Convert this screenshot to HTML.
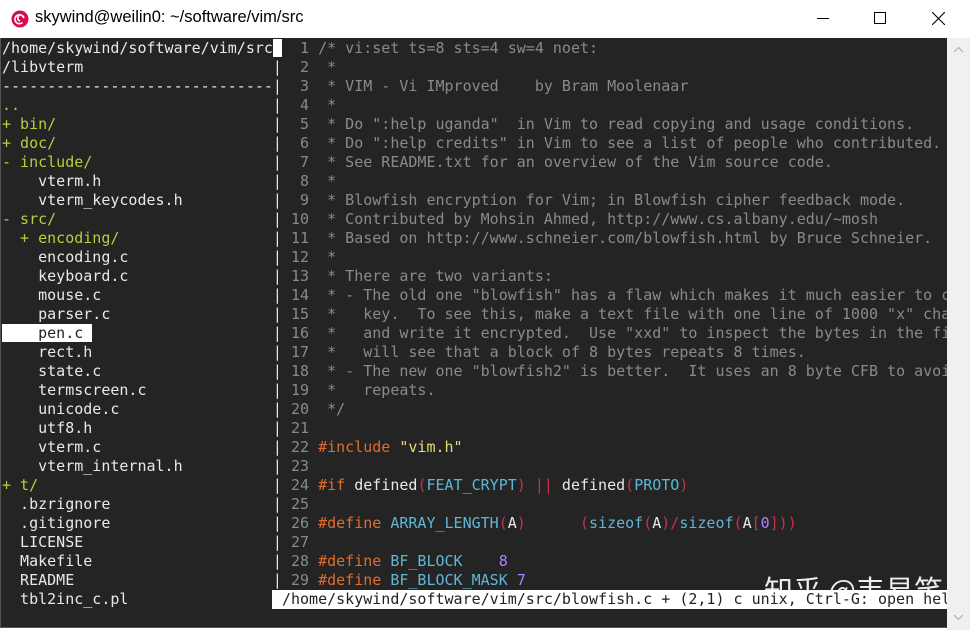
<!DOCTYPE html>
<html><head><meta charset="utf-8"><style>
*{margin:0;padding:0;box-sizing:border-box}
body{width:970px;height:630px;overflow:hidden;background:#fff;position:relative;font-family:"Liberation Sans",sans-serif}
#title{position:absolute;left:0;top:0;width:970px;height:38px;background:#fff}
#title .t{position:absolute;left:35px;top:8px;font-size:16.5px;color:#000}
#term{position:absolute;left:0;top:38px;width:947px;height:590px;background:#242424;border-left:1px solid #555;border-bottom:1px solid #555}
#sb{position:absolute;left:947px;top:38px;width:23px;height:592px;background:#f0f0f0}
.r{position:absolute;left:2px;height:19px;line-height:19px;white-space:pre;font-family:"DejaVu Sans Mono","Liberation Mono",monospace;font-size:15px;color:#e8e8e8;width:945px;overflow:hidden}
.d{color:#b5cf3f}.c{color:#8a8a8a}.n{color:#8a8a8a}.p{color:#e06c2c}.s{color:#e6db74}.b{color:#5fb6d6}.x{color:#c8304a}.m{color:#ae81ff}.w{color:#fff}
.sel{background:#fff;color:#222}
#status{position:absolute;left:272px;top:590px;width:675px;height:19px;background:#fff}
#wm{position:absolute;left:764px;top:568px;font-family:"Noto Sans CJK SC",sans-serif;font-size:29px;color:rgba(255,255,255,.92);white-space:nowrap}
</style></head><body>
<div id="title">
<svg style="position:absolute;left:11px;top:10px" width="18" height="18" viewBox="0 0 18 18"><circle cx="9" cy="9" r="8.5" fill="#d70a53"/><path d="M11.5 12.5 A4.5 4.5 0 1 1 12.8 8 A3 3 0 1 0 9 11" fill="none" stroke="#fff" stroke-width="1.6"/></svg>
<div class="t">skywind@weilin0: ~/software/vim/src</div>
<div style="position:absolute;left:817px;top:18px;width:12px;height:1px;background:#000"></div>
<div style="position:absolute;left:874px;top:12px;width:12px;height:12px;border:1px solid #000"></div>
<svg style="position:absolute;left:932px;top:12px" width="13" height="13"><path d="M0 0L13 13M13 0L0 13" stroke="#000" stroke-width="1.1"/></svg>
</div>
<div id="term"></div>
<div id="sb"><svg style="position:absolute;left:6px;top:8px" width="11" height="7"><path d="M1 6L5.5 1.5L10 6" stroke="#aaa" fill="none"/></svg><svg style="position:absolute;left:6px;top:576px" width="11" height="7"><path d="M1 1L5.5 5.5L10 1" stroke="#aaa" fill="none"/></svg></div>
<div id="status"></div>

<div class="r" style="top:39px">/home/skywind/software/vim/src<span class="sel"> </span><span class="n">  1</span> <span class="c">/* vi:set ts=8 sts=4 sw=4 noet:</span></div>
<div class="r" style="top:58px">/libvterm                     |<span class="n">  2</span> <span class="c"> *</span></div>
<div class="r" style="top:77px">------------------------------|<span class="n">  3</span> <span class="c"> * VIM - Vi IMproved    by Bram Moolenaar</span></div>
<div class="r" style="top:96px"><span class="d">..</span>                            |<span class="n">  4</span> <span class="c"> *</span></div>
<div class="r" style="top:115px"><span class="d">+ bin/</span>                        |<span class="n">  5</span> <span class="c"> * Do ":help uganda"  in Vim to read copying and usage conditions.</span></div>
<div class="r" style="top:134px"><span class="d">+ doc/</span>                        |<span class="n">  6</span> <span class="c"> * Do ":help credits" in Vim to see a list of people who contributed.</span></div>
<div class="r" style="top:153px"><span class="d">- include/</span>                    |<span class="n">  7</span> <span class="c"> * See README.txt for an overview of the Vim source code.</span></div>
<div class="r" style="top:172px">    vterm.h                   |<span class="n">  8</span> <span class="c"> *</span></div>
<div class="r" style="top:191px">    vterm_keycodes.h          |<span class="n">  9</span> <span class="c"> * Blowfish encryption for Vim; in Blowfish cipher feedback mode.</span></div>
<div class="r" style="top:210px"><span class="d">- src/</span>                        |<span class="n"> 10</span> <span class="c"> * Contributed by Mohsin Ahmed, http://www.cs.albany.edu/~mosh</span></div>
<div class="r" style="top:229px"><span class="d">  + encoding/</span>                 |<span class="n"> 11</span> <span class="c"> * Based on http://www.schneier.com/blowfish.html by Bruce Schneier.</span></div>
<div class="r" style="top:248px">    encoding.c                |<span class="n"> 12</span> <span class="c"> *</span></div>
<div class="r" style="top:267px">    keyboard.c                |<span class="n"> 13</span> <span class="c"> * There are two variants:</span></div>
<div class="r" style="top:286px">    mouse.c                   |<span class="n"> 14</span> <span class="c"> * - The old one "blowfish" has a flaw which makes it much easier to crack</span></div>
<div class="r" style="top:305px">    parser.c                  |<span class="n"> 15</span> <span class="c"> *   key.  To see this, make a text file with one line of 1000 "x" characters</span></div>
<div class="r" style="top:324px"><span class="sel">    pen.c </span>                    |<span class="n"> 16</span> <span class="c"> *   and write it encrypted.  Use "xxd" to inspect the bytes in the file.</span></div>
<div class="r" style="top:343px">    rect.h                    |<span class="n"> 17</span> <span class="c"> *   will see that a block of 8 bytes repeats 8 times.</span></div>
<div class="r" style="top:362px">    state.c                   |<span class="n"> 18</span> <span class="c"> * - The new one "blowfish2" is better.  It uses an 8 byte CFB to avoid</span></div>
<div class="r" style="top:381px">    termscreen.c              |<span class="n"> 19</span> <span class="c"> *   repeats.</span></div>
<div class="r" style="top:400px">    unicode.c                 |<span class="n"> 20</span> <span class="c"> */</span></div>
<div class="r" style="top:419px">    utf8.h                    |<span class="n"> 21</span></div>
<div class="r" style="top:438px">    vterm.c                   |<span class="n"> 22</span> <span class="p">#include</span> <span class="s">"vim.h"</span></div>
<div class="r" style="top:457px">    vterm_internal.h          |<span class="n"> 23</span></div>
<div class="r" style="top:476px"><span class="d">+ t/</span>                          |<span class="n"> 24</span> <span class="p">#if</span> defined<span class="x">(</span><span class="b">FEAT_CRYPT</span><span class="x">)</span> <span class="x">||</span> defined<span class="x">(</span><span class="b">PROTO</span><span class="x">)</span></div>
<div class="r" style="top:495px">  .bzrignore                  |<span class="n"> 25</span></div>
<div class="r" style="top:514px">  .gitignore                  |<span class="n"> 26</span> <span class="p">#define</span> <span class="b">ARRAY_LENGTH</span><span class="x">(</span>A<span class="x">)</span>      <span class="x">(</span><span class="b">sizeof</span><span class="x">(</span>A<span class="x">)/</span><span class="b">sizeof</span><span class="x">(</span>A<span class="x">[</span><span class="m">0</span><span class="x">]))</span></div>
<div class="r" style="top:533px">  LICENSE                     |<span class="n"> 27</span></div>
<div class="r" style="top:552px">  Makefile                    |<span class="n"> 28</span> <span class="p">#define</span> <span class="b">BF_BLOCK</span>    <span class="m">8</span></div>
<div class="r" style="top:571px">  README                      |<span class="n"> 29</span> <span class="p">#define</span> <span class="b">BF_BLOCK_MASK</span> <span class="m">7</span></div>
<div id="wm">知乎 @韦易笑</div>
<div class="r" style="top:590px">  tbl2inc_c.pl                <span style="color:#222;background:#fff"> /home/skywind/software/vim/src/blowfish.c + (2,1) c unix, Ctrl-G: open help      </span></div>
</body></html>
